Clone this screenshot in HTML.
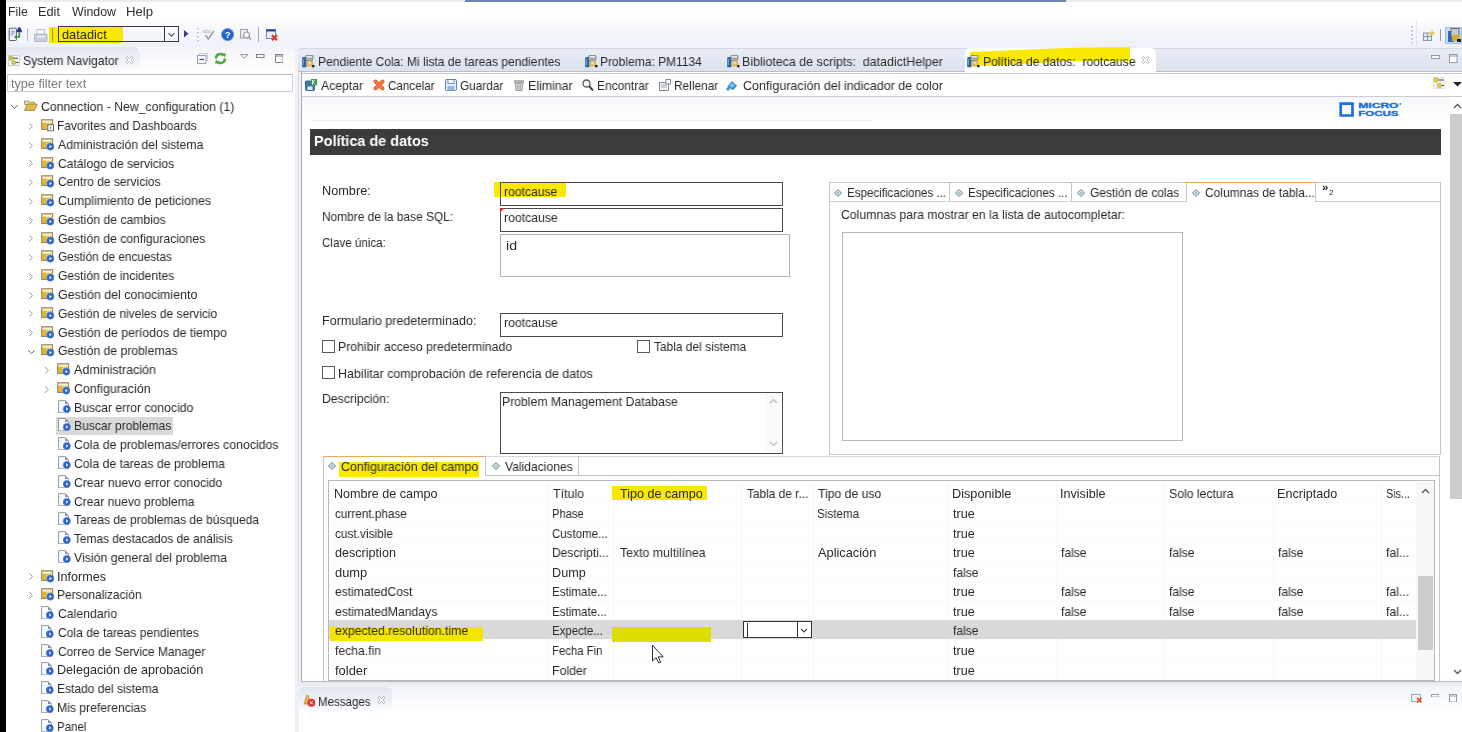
<!DOCTYPE html><html><head><meta charset='utf-8'><style>
*{margin:0;padding:0;box-sizing:border-box}
html,body{width:1462px;height:732px;overflow:hidden;background:#fff;font-family:"Liberation Sans",sans-serif;color:#262626}
body>div,body>svg{position:absolute}
.t{position:absolute;white-space:pre;transform-origin:0 0;will-change:transform}
</style></head><body>
<div style="left:0px;top:0px;width:1462px;height:1.6px;background:#ebebeb"></div>
<div style="left:465px;top:0px;width:601px;height:1.5px;background:#6d86b5"></div>
<div style="left:6px;top:20px;width:1456px;height:27px;background:linear-gradient(#fdfdfe,#f5f7fb 40%,#eef1f8)"></div>
<div style="left:6px;top:47px;width:1456px;height:685px;background:#eef1f7"></div>
<div style="left:0px;top:0px;width:6px;height:732px;background:#000"></div>
<div class="t" style="left:7.76px;top:5.90px;font-size:12.4px;line-height:12.4px;color:#303030;transform:scaleX(0.9802);">File</div>
<div class="t" style="left:37.76px;top:5.90px;font-size:12.4px;line-height:12.4px;color:#303030;transform:scaleX(1.0270);">Edit</div>
<div class="t" style="left:71.64px;top:5.90px;font-size:12.4px;line-height:12.4px;color:#303030;transform:scaleX(0.9913);">Window</div>
<div class="t" style="left:126.42px;top:5.90px;font-size:12.4px;line-height:12.4px;color:#303030;transform:scaleX(1.0637);">Help</div>
<svg style="left:8px;top:27px" width="15" height="15" viewBox="0 0 15 15"><rect x="1.2" y="1.2" width="7.2" height="12.3" rx="0.8" fill="#f2f4f8" stroke="#4a4f60" stroke-width="0.9"/><path d="M2.6 4.2h4.4M2.6 6h4.4M2.6 7.8h3" stroke="#6f8fd0" stroke-width="0.9"/><path d="M9.8 0.6h3v2.2h1v2.4h-5v-2.4h1z" fill="#1f2f8a"/><path d="M11.3 5.2v4.8h-3.5" fill="none" stroke="#3c8a3c" stroke-width="1.6"/><path d="M8.3 8l-2.2 2 2.2 2z" fill="#3c8a3c"/></svg>
<div style="left:26.5px;top:28px;width:1px;height:13px;background:#b9bfc9"></div>
<svg style="left:34px;top:28.5px" width="13.5" height="13" viewBox="0 0 13.5 13"><rect x="3" y="0.5" width="7.5" height="5.5" fill="#fbfbfb" stroke="#b8bcc4" stroke-width="0.9"/><path d="M0.6 5.2h12.3v6.2a1.5 1.5 0 0 1-1.5 1.5H2.1a1.5 1.5 0 0 1-1.5-1.5z" fill="#c9d1df" stroke="#a3abbb" stroke-width="0.9"/><rect x="2.6" y="7" width="8.3" height="1.3" fill="#eef1f6"/></svg>
<div style="left:49px;top:27px;width:74px;height:15.7px;background:#f9e900"></div>
<div style="left:52.2px;top:27.5px;width:1.1px;height:14px;background:#9a9a30"></div>
<div style="left:58px;top:26.2px;width:121px;height:16px;border:1.3px solid #3a3a3a"></div>
<div style="left:59.3px;top:27.5px;width:62px;height:13.4px;background:#f9e900"></div>
<div style="left:163.5px;top:27px;width:1.2px;height:15px;background:#3a3a3a"></div>
<svg style="left:166.5px;top:31.5px" width="9" height="6" viewBox="0 0 9 6"><path d="M1.5 1.2l3 3 3-3" fill="none" stroke="#555" stroke-width="1.1"/></svg>
<div class="t" style="left:61.87px;top:29.46px;font-size:12.8px;line-height:12.8px;color:#2a2a2a;">datadict</div>
<svg style="left:184px;top:30.3px" width="5" height="8" viewBox="0 0 5 8"><path d="M0 0l4.5 3.75L0 7.5z" fill="#3b3f8f"/></svg>
<svg style="left:196.5px;top:28px" width="2" height="13" viewBox="0 0 2 13"><path d="M1 0v1.5M1 4v1.5M1 8v1.5M1 12v1" stroke="#aaa" stroke-width="1.2"/></svg>
<svg style="left:202px;top:27.3px" width="13" height="13" viewBox="0 0 13 13"><text x="0.5" y="5.5" font-size="5.5" fill="#b0b0b0" font-family="Liberation Sans">abc</text><path d="M3.5 8l2.8 4 5.5-8" fill="none" stroke="#a0aaa5" stroke-width="1.8"/></svg>
<svg style="left:220.9px;top:27.6px" width="13.2" height="13.2" viewBox="0 0 13.2 13.2"><circle cx="6.6" cy="6.6" r="6.1" fill="#1f66c9" stroke="#6d9be6" stroke-width="0.9"/><text x="6.6" y="10.2" text-anchor="middle" font-size="9.5" font-weight="bold" fill="#fff" font-family="Liberation Sans">?</text></svg>
<svg style="left:240px;top:29px" width="11.5" height="11" viewBox="0 0 11.5 11"><rect x="0.5" y="0.5" width="7" height="8.5" fill="#eee" stroke="#999" stroke-width="0.9"/><circle cx="6.5" cy="6" r="3" fill="#f6f6f0" stroke="#a0a0a0" stroke-width="1.2"/><path d="M8.5 8l2.3 2.5" stroke="#999" stroke-width="1.6"/></svg>
<div style="left:257.6px;top:27.3px;width:1.2px;height:14.7px;background:#a8aeb8"></div>
<svg style="left:266px;top:28.8px" width="12" height="12" viewBox="0 0 12 12"><rect x="0.5" y="0.5" width="9" height="9" fill="#e8ecf5" stroke="#6a7aa0" stroke-width="0.9"/><rect x="0.5" y="0.5" width="9" height="2" fill="#2a3f9a"/><path d="M6 6.2l5 5M11 6.2l-5 5" stroke="#e03020" stroke-width="2.2"/></svg>
<svg style="left:1410.5px;top:25.5px" width="2" height="17" viewBox="0 0 2 17"><path d="M1 0v1.5M1 4v1.5M1 8v1.5M1 12v1.5M1 16v1" stroke="#999" stroke-width="1.2"/></svg>
<div style="left:1415.5px;top:21px;width:1px;height:26px;background:#e3e6ec"></div>
<svg style="left:1423px;top:29.6px" width="12" height="11" viewBox="0 0 12 11"><rect x="0.5" y="3" width="8" height="7.5" fill="#e4ecf6" stroke="#8090a8" stroke-width="0.9"/><path d="M0.5 6.5h8M4.5 3v7.5" stroke="#8090a8" stroke-width="0.9"/><path d="M9 0l1.2 2 2 .3-1.5 1.5.4 2-2-1-2 1 .4-2-1.5-1.5 2-.3z" fill="#f3c84a"/></svg>
<div style="left:1440.2px;top:29px;width:1px;height:12px;background:#99a"></div>
<div style="left:1445px;top:27px;width:17px;height:17px;background:#c6dcf5;border:1px solid #9cc0ea"></div>
<svg style="left:1447px;top:28px" width="15" height="15" viewBox="0 0 15 15"><rect x="1" y="3" width="6" height="11" fill="#2d6db5"/><rect x="4" y="0.5" width="8" height="9" fill="#c9c9c9" stroke="#555" stroke-width="0.8"/><rect x="5" y="7" width="8" height="6" fill="#d8a838"/><rect x="10" y="11" width="4" height="3" fill="#222"/></svg>
<div style="left:6px;top:47px;width:288.8px;height:685px;background:#fff;border-top-right-radius:5px"></div>
<div style="left:6px;top:47px;width:133.5px;height:25px;background:linear-gradient(#e2e7f0,#f3f5f9 70%,#fff);border-top-right-radius:6px"></div>
<div style="left:139.5px;top:47px;width:155.3px;height:25px;background:linear-gradient(#f3f5f9,#fff);border-top-right-radius:5px"></div>
<svg style="left:8.2px;top:55.4px" width="12" height="11" viewBox="0 0 12 11"><rect x="0.5" y="0.5" width="11" height="10" fill="#f7f7f2" stroke="#c8c8c0" stroke-width="0.8"/><circle cx="3" cy="3.2" r="2" fill="#d6d24a" stroke="#8a8a30" stroke-width="0.6"/><circle cx="5.8" cy="7.5" r="2" fill="#d6d24a" stroke="#8a8a30" stroke-width="0.6"/><path d="M5 3.2h5M8.3 7.5h2.5" stroke="#333" stroke-width="0.9"/></svg>
<div class="t" style="left:23.05px;top:55.43px;font-size:12.6px;line-height:12.6px;color:#2a2a2a;transform:scaleX(0.9619);">System Navigator</div>
<svg style="left:125px;top:56px" width="9" height="9" viewBox="0 0 9 9"><path d="M1 1.5l1.5-1 2 2 2-2 1.5 1-2 2.5 2 2.5-1.5 1-2-2-2 2-1.5-1 2-2.5z" fill="#fff" stroke="#a8a8a8" stroke-width="0.8"/></svg>
<svg style="left:196.8px;top:53px" width="11" height="11" viewBox="0 0 11 11"><rect x="2.5" y="0.5" width="8" height="7" fill="#eef2f8" stroke="#c0c6d2" stroke-width="0.8"/><rect x="0.5" y="2.5" width="8.5" height="8" fill="#f4f7fb" stroke="#8e9ab0" stroke-width="0.9"/><path d="M2.5 6.5h4.5" stroke="#3a5080" stroke-width="1.2"/></svg>
<svg style="left:214px;top:51.5px" width="13" height="13" viewBox="0 0 13 13"><path d="M2 6.5a4.5 4.5 0 0 1 8-2.8" fill="none" stroke="#4fa83e" stroke-width="2.6"/><path d="M11 6.5a4.5 4.5 0 0 1-8 2.8" fill="none" stroke="#4fa83e" stroke-width="2.6"/><path d="M8 1.5l4 0-1 4z" fill="#4fa83e"/><path d="M5 11.5l-4 0 1-4z" fill="#4fa83e"/></svg>
<svg style="left:240px;top:53.9px" width="8.5" height="5" viewBox="0 0 8.5 5"><path d="M0.8 0.6h7l-3.5 3.8z" fill="#fff" stroke="#888" stroke-width="0.9"/></svg>
<svg style="left:256px;top:54px" width="8.5" height="4" viewBox="0 0 8.5 4"><rect x="0.5" y="0.5" width="7.5" height="3" fill="#fff" stroke="#777" stroke-width="0.9"/></svg>
<svg style="left:274.8px;top:54px" width="8.5" height="9" viewBox="0 0 8.5 9"><rect x="0.5" y="0.5" width="7.5" height="8" fill="#fff" stroke="#777" stroke-width="0.9"/><path d="M0.5 2h7.5" stroke="#777" stroke-width="0.9"/></svg>
<div style="left:7px;top:73.8px;width:285.5px;height:18.5px;border:1px solid #cfcfcf;border-top-color:#c2c2c2;background:#fff"></div>
<div class="t" style="left:11.11px;top:78.03px;font-size:12.6px;line-height:12.6px;color:#7c7c7c;transform:scaleX(1.0036);">type filter text</div>
<svg style="left:10px;top:103.5px" width="9" height="6" viewBox="0 0 9 6"><path d="M1.2 1.2l3.3 3.2 3.3-3.2" fill="none" stroke="#666" stroke-width="1"/></svg>
<svg style="left:24px;top:99.0px" width="14" height="13" viewBox="0 0 14 13"><path d="M0.5 2h4l1 1.3h5v2.2h-10z" fill="#f3df9a" stroke="#9a8a58" stroke-width="0.9"/><path d="M0.5 11.5h10l2.8-6.5h-10z" fill="#e3b83c" stroke="#9a8a58" stroke-width="0.9"/></svg>
<div class="t" style="left:41.09px;top:101.33px;font-size:12.6px;line-height:12.6px;color:#2a2a2a;transform:scaleX(0.9757);">Connection - New_configuration (1)</div>
<svg style="left:27.900000000000002px;top:121.77000000000001px" width="6" height="9" viewBox="0 0 6 9"><path d="M1.2 1.2l3.2 3.3-3.2 3.3" fill="none" stroke="#9a9a9a" stroke-width="1"/></svg>
<svg style="left:41.10000000000001px;top:119.07000000000001px" width="14" height="14" viewBox="0 0 14 14"><rect x="0.7" y="0.8" width="11" height="9.8" fill="#dcb548" stroke="#7f7350" stroke-width="0.9"/><rect x="1.3" y="1.6" width="9.8" height="2.2" fill="#f6f0dc"/><rect x="1.3" y="3.8" width="4" height="6.4" fill="#e2b432"/><rect x="5.3" y="3.8" width="5.8" height="6.4" fill="#e4d27a"/><rect x="6.8" y="5.8" width="5.7" height="6" fill="#fff" stroke="#555" stroke-width="0.9"/><path d="M9.8 7.5l-1 2 1.6 0z" fill="#222"/></svg>
<div class="t" style="left:57.23px;top:120.10px;font-size:12.6px;line-height:12.6px;color:#2a2a2a;transform:scaleX(0.9447);">Favorites and Dashboards</div>
<svg style="left:27.900000000000002px;top:140.54px" width="6" height="9" viewBox="0 0 6 9"><path d="M1.2 1.2l3.2 3.3-3.2 3.3" fill="none" stroke="#9a9a9a" stroke-width="1"/></svg>
<svg style="left:41.10000000000001px;top:137.84px" width="14" height="14" viewBox="0 0 14 14"><rect x="0.7" y="0.8" width="11" height="9.8" fill="#dcb548" stroke="#7f7350" stroke-width="0.9"/><rect x="1.3" y="1.6" width="9.8" height="2.2" fill="#f6f0dc"/><rect x="1.3" y="3.8" width="4" height="6.4" fill="#e2b432"/><rect x="5.3" y="3.8" width="5.8" height="6.4" fill="#e4d27a"/><circle cx="9.3" cy="8.6" r="3.6" fill="#2f66cc" stroke="#4f86de" stroke-width="0.6"/><path d="M8.5 6.9l2.4 1.7-2.4 1.7z" fill="#fff"/></svg>
<div class="t" style="left:58.18px;top:138.87px;font-size:12.6px;line-height:12.6px;color:#2a2a2a;transform:scaleX(0.9704);">Administración del sistema</div>
<svg style="left:27.900000000000002px;top:159.31px" width="6" height="9" viewBox="0 0 6 9"><path d="M1.2 1.2l3.2 3.3-3.2 3.3" fill="none" stroke="#9a9a9a" stroke-width="1"/></svg>
<svg style="left:41.10000000000001px;top:156.61px" width="14" height="14" viewBox="0 0 14 14"><rect x="0.7" y="0.8" width="11" height="9.8" fill="#dcb548" stroke="#7f7350" stroke-width="0.9"/><rect x="1.3" y="1.6" width="9.8" height="2.2" fill="#f6f0dc"/><rect x="1.3" y="3.8" width="4" height="6.4" fill="#e2b432"/><rect x="5.3" y="3.8" width="5.8" height="6.4" fill="#e4d27a"/><circle cx="9.3" cy="8.6" r="3.6" fill="#2f66cc" stroke="#4f86de" stroke-width="0.6"/><path d="M8.5 6.9l2.4 1.7-2.4 1.7z" fill="#fff"/></svg>
<div class="t" style="left:57.59px;top:157.64px;font-size:12.6px;line-height:12.6px;color:#2a2a2a;transform:scaleX(0.9660);">Catálogo de servicios</div>
<svg style="left:27.900000000000002px;top:178.07999999999998px" width="6" height="9" viewBox="0 0 6 9"><path d="M1.2 1.2l3.2 3.3-3.2 3.3" fill="none" stroke="#9a9a9a" stroke-width="1"/></svg>
<svg style="left:41.10000000000001px;top:175.38px" width="14" height="14" viewBox="0 0 14 14"><rect x="0.7" y="0.8" width="11" height="9.8" fill="#dcb548" stroke="#7f7350" stroke-width="0.9"/><rect x="1.3" y="1.6" width="9.8" height="2.2" fill="#f6f0dc"/><rect x="1.3" y="3.8" width="4" height="6.4" fill="#e2b432"/><rect x="5.3" y="3.8" width="5.8" height="6.4" fill="#e4d27a"/><circle cx="9.3" cy="8.6" r="3.6" fill="#2f66cc" stroke="#4f86de" stroke-width="0.6"/><path d="M8.5 6.9l2.4 1.7-2.4 1.7z" fill="#fff"/></svg>
<div class="t" style="left:57.60px;top:176.41px;font-size:12.6px;line-height:12.6px;color:#2a2a2a;transform:scaleX(0.9509);">Centro de servicios</div>
<svg style="left:27.900000000000002px;top:196.85px" width="6" height="9" viewBox="0 0 6 9"><path d="M1.2 1.2l3.2 3.3-3.2 3.3" fill="none" stroke="#9a9a9a" stroke-width="1"/></svg>
<svg style="left:41.10000000000001px;top:194.15px" width="14" height="14" viewBox="0 0 14 14"><rect x="0.7" y="0.8" width="11" height="9.8" fill="#dcb548" stroke="#7f7350" stroke-width="0.9"/><rect x="1.3" y="1.6" width="9.8" height="2.2" fill="#f6f0dc"/><rect x="1.3" y="3.8" width="4" height="6.4" fill="#e2b432"/><rect x="5.3" y="3.8" width="5.8" height="6.4" fill="#e4d27a"/><circle cx="9.3" cy="8.6" r="3.6" fill="#2f66cc" stroke="#4f86de" stroke-width="0.6"/><path d="M8.5 6.9l2.4 1.7-2.4 1.7z" fill="#fff"/></svg>
<div class="t" style="left:57.58px;top:195.18px;font-size:12.6px;line-height:12.6px;color:#2a2a2a;transform:scaleX(0.9891);">Cumplimiento de peticiones</div>
<svg style="left:27.900000000000002px;top:215.62px" width="6" height="9" viewBox="0 0 6 9"><path d="M1.2 1.2l3.2 3.3-3.2 3.3" fill="none" stroke="#9a9a9a" stroke-width="1"/></svg>
<svg style="left:41.10000000000001px;top:212.92000000000002px" width="14" height="14" viewBox="0 0 14 14"><rect x="0.7" y="0.8" width="11" height="9.8" fill="#dcb548" stroke="#7f7350" stroke-width="0.9"/><rect x="1.3" y="1.6" width="9.8" height="2.2" fill="#f6f0dc"/><rect x="1.3" y="3.8" width="4" height="6.4" fill="#e2b432"/><rect x="5.3" y="3.8" width="5.8" height="6.4" fill="#e4d27a"/><circle cx="9.3" cy="8.6" r="3.6" fill="#2f66cc" stroke="#4f86de" stroke-width="0.6"/><path d="M8.5 6.9l2.4 1.7-2.4 1.7z" fill="#fff"/></svg>
<div class="t" style="left:57.59px;top:213.95px;font-size:12.6px;line-height:12.6px;color:#2a2a2a;transform:scaleX(0.9676);">Gestión de cambios</div>
<svg style="left:27.900000000000002px;top:234.39px" width="6" height="9" viewBox="0 0 6 9"><path d="M1.2 1.2l3.2 3.3-3.2 3.3" fill="none" stroke="#9a9a9a" stroke-width="1"/></svg>
<svg style="left:41.10000000000001px;top:231.69px" width="14" height="14" viewBox="0 0 14 14"><rect x="0.7" y="0.8" width="11" height="9.8" fill="#dcb548" stroke="#7f7350" stroke-width="0.9"/><rect x="1.3" y="1.6" width="9.8" height="2.2" fill="#f6f0dc"/><rect x="1.3" y="3.8" width="4" height="6.4" fill="#e2b432"/><rect x="5.3" y="3.8" width="5.8" height="6.4" fill="#e4d27a"/><circle cx="9.3" cy="8.6" r="3.6" fill="#2f66cc" stroke="#4f86de" stroke-width="0.6"/><path d="M8.5 6.9l2.4 1.7-2.4 1.7z" fill="#fff"/></svg>
<div class="t" style="left:57.59px;top:232.72px;font-size:12.6px;line-height:12.6px;color:#2a2a2a;transform:scaleX(0.9650);">Gestión de configuraciones</div>
<svg style="left:27.900000000000002px;top:253.15999999999997px" width="6" height="9" viewBox="0 0 6 9"><path d="M1.2 1.2l3.2 3.3-3.2 3.3" fill="none" stroke="#9a9a9a" stroke-width="1"/></svg>
<svg style="left:41.10000000000001px;top:250.45999999999998px" width="14" height="14" viewBox="0 0 14 14"><rect x="0.7" y="0.8" width="11" height="9.8" fill="#dcb548" stroke="#7f7350" stroke-width="0.9"/><rect x="1.3" y="1.6" width="9.8" height="2.2" fill="#f6f0dc"/><rect x="1.3" y="3.8" width="4" height="6.4" fill="#e2b432"/><rect x="5.3" y="3.8" width="5.8" height="6.4" fill="#e4d27a"/><circle cx="9.3" cy="8.6" r="3.6" fill="#2f66cc" stroke="#4f86de" stroke-width="0.6"/><path d="M8.5 6.9l2.4 1.7-2.4 1.7z" fill="#fff"/></svg>
<div class="t" style="left:57.61px;top:251.49px;font-size:12.6px;line-height:12.6px;color:#2a2a2a;transform:scaleX(0.9355);">Gestión de encuestas</div>
<svg style="left:27.900000000000002px;top:271.93px" width="6" height="9" viewBox="0 0 6 9"><path d="M1.2 1.2l3.2 3.3-3.2 3.3" fill="none" stroke="#9a9a9a" stroke-width="1"/></svg>
<svg style="left:41.10000000000001px;top:269.23px" width="14" height="14" viewBox="0 0 14 14"><rect x="0.7" y="0.8" width="11" height="9.8" fill="#dcb548" stroke="#7f7350" stroke-width="0.9"/><rect x="1.3" y="1.6" width="9.8" height="2.2" fill="#f6f0dc"/><rect x="1.3" y="3.8" width="4" height="6.4" fill="#e2b432"/><rect x="5.3" y="3.8" width="5.8" height="6.4" fill="#e4d27a"/><circle cx="9.3" cy="8.6" r="3.6" fill="#2f66cc" stroke="#4f86de" stroke-width="0.6"/><path d="M8.5 6.9l2.4 1.7-2.4 1.7z" fill="#fff"/></svg>
<div class="t" style="left:57.60px;top:270.26px;font-size:12.6px;line-height:12.6px;color:#2a2a2a;transform:scaleX(0.9602);">Gestión de incidentes</div>
<svg style="left:27.900000000000002px;top:290.7px" width="6" height="9" viewBox="0 0 6 9"><path d="M1.2 1.2l3.2 3.3-3.2 3.3" fill="none" stroke="#9a9a9a" stroke-width="1"/></svg>
<svg style="left:41.10000000000001px;top:288.0px" width="14" height="14" viewBox="0 0 14 14"><rect x="0.7" y="0.8" width="11" height="9.8" fill="#dcb548" stroke="#7f7350" stroke-width="0.9"/><rect x="1.3" y="1.6" width="9.8" height="2.2" fill="#f6f0dc"/><rect x="1.3" y="3.8" width="4" height="6.4" fill="#e2b432"/><rect x="5.3" y="3.8" width="5.8" height="6.4" fill="#e4d27a"/><circle cx="9.3" cy="8.6" r="3.6" fill="#2f66cc" stroke="#4f86de" stroke-width="0.6"/><path d="M8.5 6.9l2.4 1.7-2.4 1.7z" fill="#fff"/></svg>
<div class="t" style="left:57.58px;top:289.03px;font-size:12.6px;line-height:12.6px;color:#2a2a2a;transform:scaleX(0.9849);">Gestión del conocimiento</div>
<svg style="left:27.900000000000002px;top:309.47px" width="6" height="9" viewBox="0 0 6 9"><path d="M1.2 1.2l3.2 3.3-3.2 3.3" fill="none" stroke="#9a9a9a" stroke-width="1"/></svg>
<svg style="left:41.10000000000001px;top:306.77000000000004px" width="14" height="14" viewBox="0 0 14 14"><rect x="0.7" y="0.8" width="11" height="9.8" fill="#dcb548" stroke="#7f7350" stroke-width="0.9"/><rect x="1.3" y="1.6" width="9.8" height="2.2" fill="#f6f0dc"/><rect x="1.3" y="3.8" width="4" height="6.4" fill="#e2b432"/><rect x="5.3" y="3.8" width="5.8" height="6.4" fill="#e4d27a"/><circle cx="9.3" cy="8.6" r="3.6" fill="#2f66cc" stroke="#4f86de" stroke-width="0.6"/><path d="M8.5 6.9l2.4 1.7-2.4 1.7z" fill="#fff"/></svg>
<div class="t" style="left:57.60px;top:307.80px;font-size:12.6px;line-height:12.6px;color:#2a2a2a;transform:scaleX(0.9517);">Gestión de niveles de servicio</div>
<svg style="left:27.900000000000002px;top:328.24px" width="6" height="9" viewBox="0 0 6 9"><path d="M1.2 1.2l3.2 3.3-3.2 3.3" fill="none" stroke="#9a9a9a" stroke-width="1"/></svg>
<svg style="left:41.10000000000001px;top:325.54px" width="14" height="14" viewBox="0 0 14 14"><rect x="0.7" y="0.8" width="11" height="9.8" fill="#dcb548" stroke="#7f7350" stroke-width="0.9"/><rect x="1.3" y="1.6" width="9.8" height="2.2" fill="#f6f0dc"/><rect x="1.3" y="3.8" width="4" height="6.4" fill="#e2b432"/><rect x="5.3" y="3.8" width="5.8" height="6.4" fill="#e4d27a"/><circle cx="9.3" cy="8.6" r="3.6" fill="#2f66cc" stroke="#4f86de" stroke-width="0.6"/><path d="M8.5 6.9l2.4 1.7-2.4 1.7z" fill="#fff"/></svg>
<div class="t" style="left:57.58px;top:326.57px;font-size:12.6px;line-height:12.6px;color:#2a2a2a;transform:scaleX(0.9804);">Gestión de períodos de tiempo</div>
<svg style="left:26.900000000000002px;top:348.51px" width="9" height="6" viewBox="0 0 9 6"><path d="M1.2 1.2l3.3 3.2 3.3-3.2" fill="none" stroke="#666" stroke-width="1"/></svg>
<svg style="left:41.10000000000001px;top:344.31px" width="14" height="14" viewBox="0 0 14 14"><rect x="0.7" y="0.8" width="11" height="9.8" fill="#dcb548" stroke="#7f7350" stroke-width="0.9"/><rect x="1.3" y="1.6" width="9.8" height="2.2" fill="#f6f0dc"/><rect x="1.3" y="3.8" width="4" height="6.4" fill="#e2b432"/><rect x="5.3" y="3.8" width="5.8" height="6.4" fill="#e4d27a"/><circle cx="9.3" cy="8.6" r="3.6" fill="#2f66cc" stroke="#4f86de" stroke-width="0.6"/><path d="M8.5 6.9l2.4 1.7-2.4 1.7z" fill="#fff"/></svg>
<div class="t" style="left:57.59px;top:345.34px;font-size:12.6px;line-height:12.6px;color:#2a2a2a;transform:scaleX(0.9699);">Gestión de problemas</div>
<svg style="left:44.2px;top:365.78px" width="6" height="9" viewBox="0 0 6 9"><path d="M1.2 1.2l3.2 3.3-3.2 3.3" fill="none" stroke="#9a9a9a" stroke-width="1"/></svg>
<svg style="left:57.400000000000006px;top:363.08px" width="14" height="14" viewBox="0 0 14 14"><rect x="0.7" y="0.8" width="11" height="9.8" fill="#dcb548" stroke="#7f7350" stroke-width="0.9"/><rect x="1.3" y="1.6" width="9.8" height="2.2" fill="#f6f0dc"/><rect x="1.3" y="3.8" width="4" height="6.4" fill="#e2b432"/><rect x="5.3" y="3.8" width="5.8" height="6.4" fill="#e4d27a"/><circle cx="9.3" cy="8.6" r="3.6" fill="#2f66cc" stroke="#4f86de" stroke-width="0.6"/><path d="M8.5 6.9l2.4 1.7-2.4 1.7z" fill="#fff"/></svg>
<div class="t" style="left:74.48px;top:364.11px;font-size:12.6px;line-height:12.6px;color:#2a2a2a;transform:scaleX(0.9927);">Administración</div>
<svg style="left:44.2px;top:384.55px" width="6" height="9" viewBox="0 0 6 9"><path d="M1.2 1.2l3.2 3.3-3.2 3.3" fill="none" stroke="#9a9a9a" stroke-width="1"/></svg>
<svg style="left:57.400000000000006px;top:381.85px" width="14" height="14" viewBox="0 0 14 14"><rect x="0.7" y="0.8" width="11" height="9.8" fill="#dcb548" stroke="#7f7350" stroke-width="0.9"/><rect x="1.3" y="1.6" width="9.8" height="2.2" fill="#f6f0dc"/><rect x="1.3" y="3.8" width="4" height="6.4" fill="#e2b432"/><rect x="5.3" y="3.8" width="5.8" height="6.4" fill="#e4d27a"/><circle cx="9.3" cy="8.6" r="3.6" fill="#2f66cc" stroke="#4f86de" stroke-width="0.6"/><path d="M8.5 6.9l2.4 1.7-2.4 1.7z" fill="#fff"/></svg>
<div class="t" style="left:73.88px;top:382.88px;font-size:12.6px;line-height:12.6px;color:#2a2a2a;transform:scaleX(0.9854);">Configuración</div>
<svg style="left:57.5px;top:399.62px" width="13" height="13" viewBox="0 0 13 13"><path d="M0.6 0.6h6.6l3.2 3.2v9h-9.8z" fill="#fbfdff" stroke="#8d9aaa" stroke-width="1"/><path d="M7 0.6v3.4h3.4z" fill="#7f93b8"/><circle cx="8.8" cy="9.0" r="3.6" fill="#2f62c8" stroke="#4f80d8" stroke-width="0.6"/><path d="M8.1 7.3l2.3 1.7-2.3 1.7z" fill="#e8f4ff"/></svg>
<div class="t" style="left:73.50px;top:401.65px;font-size:12.6px;line-height:12.6px;color:#2a2a2a;transform:scaleX(0.9686);">Buscar error conocido</div>
<div style="left:56.2px;top:416.59px;width:117px;height:18px;background:#d9d9d9"></div>
<svg style="left:57.5px;top:418.39px" width="13" height="13" viewBox="0 0 13 13"><path d="M0.6 0.6h6.6l3.2 3.2v9h-9.8z" fill="#fbfdff" stroke="#8d9aaa" stroke-width="1"/><path d="M7 0.6v3.4h3.4z" fill="#7f93b8"/><circle cx="8.8" cy="9.0" r="3.6" fill="#2f62c8" stroke="#4f80d8" stroke-width="0.6"/><path d="M8.1 7.3l2.3 1.7-2.3 1.7z" fill="#e8f4ff"/></svg>
<div class="t" style="left:73.51px;top:420.42px;font-size:12.6px;line-height:12.6px;color:#2a2a2a;transform:scaleX(0.9586);">Buscar problemas</div>
<svg style="left:57.5px;top:437.16px" width="13" height="13" viewBox="0 0 13 13"><path d="M0.6 0.6h6.6l3.2 3.2v9h-9.8z" fill="#fbfdff" stroke="#8d9aaa" stroke-width="1"/><path d="M7 0.6v3.4h3.4z" fill="#7f93b8"/><circle cx="8.8" cy="9.0" r="3.6" fill="#2f62c8" stroke="#4f80d8" stroke-width="0.6"/><path d="M8.1 7.3l2.3 1.7-2.3 1.7z" fill="#e8f4ff"/></svg>
<div class="t" style="left:73.88px;top:439.19px;font-size:12.6px;line-height:12.6px;color:#2a2a2a;transform:scaleX(0.9769);">Cola de problemas/errores conocidos</div>
<svg style="left:57.5px;top:455.93px" width="13" height="13" viewBox="0 0 13 13"><path d="M0.6 0.6h6.6l3.2 3.2v9h-9.8z" fill="#fbfdff" stroke="#8d9aaa" stroke-width="1"/><path d="M7 0.6v3.4h3.4z" fill="#7f93b8"/><circle cx="8.8" cy="9.0" r="3.6" fill="#2f62c8" stroke="#4f80d8" stroke-width="0.6"/><path d="M8.1 7.3l2.3 1.7-2.3 1.7z" fill="#e8f4ff"/></svg>
<div class="t" style="left:73.89px;top:457.96px;font-size:12.6px;line-height:12.6px;color:#2a2a2a;transform:scaleX(0.9705);">Cola de tareas de problema</div>
<svg style="left:57.5px;top:474.7px" width="13" height="13" viewBox="0 0 13 13"><path d="M0.6 0.6h6.6l3.2 3.2v9h-9.8z" fill="#fbfdff" stroke="#8d9aaa" stroke-width="1"/><path d="M7 0.6v3.4h3.4z" fill="#7f93b8"/><circle cx="8.8" cy="9.0" r="3.6" fill="#2f62c8" stroke="#4f80d8" stroke-width="0.6"/><path d="M8.1 7.3l2.3 1.7-2.3 1.7z" fill="#e8f4ff"/></svg>
<div class="t" style="left:73.89px;top:476.73px;font-size:12.6px;line-height:12.6px;color:#2a2a2a;transform:scaleX(0.9676);">Crear nuevo error conocido</div>
<svg style="left:57.5px;top:493.47px" width="13" height="13" viewBox="0 0 13 13"><path d="M0.6 0.6h6.6l3.2 3.2v9h-9.8z" fill="#fbfdff" stroke="#8d9aaa" stroke-width="1"/><path d="M7 0.6v3.4h3.4z" fill="#7f93b8"/><circle cx="8.8" cy="9.0" r="3.6" fill="#2f62c8" stroke="#4f80d8" stroke-width="0.6"/><path d="M8.1 7.3l2.3 1.7-2.3 1.7z" fill="#e8f4ff"/></svg>
<div class="t" style="left:73.89px;top:495.50px;font-size:12.6px;line-height:12.6px;color:#2a2a2a;transform:scaleX(0.9620);">Crear nuevo problema</div>
<svg style="left:57.5px;top:512.24px" width="13" height="13" viewBox="0 0 13 13"><path d="M0.6 0.6h6.6l3.2 3.2v9h-9.8z" fill="#fbfdff" stroke="#8d9aaa" stroke-width="1"/><path d="M7 0.6v3.4h3.4z" fill="#7f93b8"/><circle cx="8.8" cy="9.0" r="3.6" fill="#2f62c8" stroke="#4f80d8" stroke-width="0.6"/><path d="M8.1 7.3l2.3 1.7-2.3 1.7z" fill="#e8f4ff"/></svg>
<div class="t" style="left:74.24px;top:514.27px;font-size:12.6px;line-height:12.6px;color:#2a2a2a;transform:scaleX(0.9537);">Tareas de problemas de búsqueda</div>
<svg style="left:57.5px;top:531.01px" width="13" height="13" viewBox="0 0 13 13"><path d="M0.6 0.6h6.6l3.2 3.2v9h-9.8z" fill="#fbfdff" stroke="#8d9aaa" stroke-width="1"/><path d="M7 0.6v3.4h3.4z" fill="#7f93b8"/><circle cx="8.8" cy="9.0" r="3.6" fill="#2f62c8" stroke="#4f80d8" stroke-width="0.6"/><path d="M8.1 7.3l2.3 1.7-2.3 1.7z" fill="#e8f4ff"/></svg>
<div class="t" style="left:74.24px;top:533.04px;font-size:12.6px;line-height:12.6px;color:#2a2a2a;transform:scaleX(0.9447);">Temas destacados de análisis</div>
<svg style="left:57.5px;top:549.78px" width="13" height="13" viewBox="0 0 13 13"><path d="M0.6 0.6h6.6l3.2 3.2v9h-9.8z" fill="#fbfdff" stroke="#8d9aaa" stroke-width="1"/><path d="M7 0.6v3.4h3.4z" fill="#7f93b8"/><circle cx="8.8" cy="9.0" r="3.6" fill="#2f62c8" stroke="#4f80d8" stroke-width="0.6"/><path d="M8.1 7.3l2.3 1.7-2.3 1.7z" fill="#e8f4ff"/></svg>
<div class="t" style="left:74.44px;top:551.81px;font-size:12.6px;line-height:12.6px;color:#2a2a2a;transform:scaleX(0.9814);">Visión general del problema</div>
<svg style="left:27.900000000000002px;top:572.25px" width="6" height="9" viewBox="0 0 6 9"><path d="M1.2 1.2l3.2 3.3-3.2 3.3" fill="none" stroke="#9a9a9a" stroke-width="1"/></svg>
<svg style="left:41.10000000000001px;top:569.55px" width="14" height="14" viewBox="0 0 14 14"><rect x="0.7" y="0.8" width="11" height="9.8" fill="#dcb548" stroke="#7f7350" stroke-width="0.9"/><rect x="1.3" y="1.6" width="9.8" height="2.2" fill="#f6f0dc"/><rect x="1.3" y="3.8" width="4" height="6.4" fill="#e2b432"/><rect x="5.3" y="3.8" width="5.8" height="6.4" fill="#e4d27a"/><circle cx="9.3" cy="8.6" r="3.6" fill="#2f66cc" stroke="#4f86de" stroke-width="0.6"/><path d="M8.5 6.9l2.4 1.7-2.4 1.7z" fill="#fff"/></svg>
<div class="t" style="left:57.05px;top:570.58px;font-size:12.6px;line-height:12.6px;color:#2a2a2a;transform:scaleX(0.9916);">Informes</div>
<svg style="left:27.900000000000002px;top:591.02px" width="6" height="9" viewBox="0 0 6 9"><path d="M1.2 1.2l3.2 3.3-3.2 3.3" fill="none" stroke="#9a9a9a" stroke-width="1"/></svg>
<svg style="left:41.10000000000001px;top:588.3199999999999px" width="14" height="14" viewBox="0 0 14 14"><rect x="0.7" y="0.8" width="11" height="9.8" fill="#dcb548" stroke="#7f7350" stroke-width="0.9"/><rect x="1.3" y="1.6" width="9.8" height="2.2" fill="#f6f0dc"/><rect x="1.3" y="3.8" width="4" height="6.4" fill="#e2b432"/><rect x="5.3" y="3.8" width="5.8" height="6.4" fill="#e4d27a"/><circle cx="9.3" cy="8.6" r="3.6" fill="#2f66cc" stroke="#4f86de" stroke-width="0.6"/><path d="M8.5 6.9l2.4 1.7-2.4 1.7z" fill="#fff"/></svg>
<div class="t" style="left:57.22px;top:589.35px;font-size:12.6px;line-height:12.6px;color:#2a2a2a;transform:scaleX(0.9505);">Personalización</div>
<svg style="left:41.2px;top:606.0899999999999px" width="13" height="13" viewBox="0 0 13 13"><path d="M0.6 0.6h6.6l3.2 3.2v9h-9.8z" fill="#fbfdff" stroke="#8d9aaa" stroke-width="1"/><path d="M7 0.6v3.4h3.4z" fill="#7f93b8"/><circle cx="8.8" cy="9.0" r="3.6" fill="#2f62c8" stroke="#4f80d8" stroke-width="0.6"/><path d="M8.1 7.3l2.3 1.7-2.3 1.7z" fill="#e8f4ff"/></svg>
<div class="t" style="left:57.59px;top:608.12px;font-size:12.6px;line-height:12.6px;color:#2a2a2a;transform:scaleX(0.9701);">Calendario</div>
<svg style="left:41.2px;top:624.8599999999999px" width="13" height="13" viewBox="0 0 13 13"><path d="M0.6 0.6h6.6l3.2 3.2v9h-9.8z" fill="#fbfdff" stroke="#8d9aaa" stroke-width="1"/><path d="M7 0.6v3.4h3.4z" fill="#7f93b8"/><circle cx="8.8" cy="9.0" r="3.6" fill="#2f62c8" stroke="#4f80d8" stroke-width="0.6"/><path d="M8.1 7.3l2.3 1.7-2.3 1.7z" fill="#e8f4ff"/></svg>
<div class="t" style="left:57.60px;top:626.89px;font-size:12.6px;line-height:12.6px;color:#2a2a2a;transform:scaleX(0.9574);">Cola de tareas pendientes</div>
<svg style="left:41.2px;top:643.63px" width="13" height="13" viewBox="0 0 13 13"><path d="M0.6 0.6h6.6l3.2 3.2v9h-9.8z" fill="#fbfdff" stroke="#8d9aaa" stroke-width="1"/><path d="M7 0.6v3.4h3.4z" fill="#7f93b8"/><circle cx="8.8" cy="9.0" r="3.6" fill="#2f62c8" stroke="#4f80d8" stroke-width="0.6"/><path d="M8.1 7.3l2.3 1.7-2.3 1.7z" fill="#e8f4ff"/></svg>
<div class="t" style="left:57.60px;top:645.66px;font-size:12.6px;line-height:12.6px;color:#2a2a2a;transform:scaleX(0.9517);">Correo de Service Manager</div>
<svg style="left:41.2px;top:662.4px" width="13" height="13" viewBox="0 0 13 13"><path d="M0.6 0.6h6.6l3.2 3.2v9h-9.8z" fill="#fbfdff" stroke="#8d9aaa" stroke-width="1"/><path d="M7 0.6v3.4h3.4z" fill="#7f93b8"/><circle cx="8.8" cy="9.0" r="3.6" fill="#2f62c8" stroke="#4f80d8" stroke-width="0.6"/><path d="M8.1 7.3l2.3 1.7-2.3 1.7z" fill="#e8f4ff"/></svg>
<div class="t" style="left:57.17px;top:664.43px;font-size:12.6px;line-height:12.6px;color:#2a2a2a;transform:scaleX(0.9968);">Delegación de aprobación</div>
<svg style="left:41.2px;top:681.17px" width="13" height="13" viewBox="0 0 13 13"><path d="M0.6 0.6h6.6l3.2 3.2v9h-9.8z" fill="#fbfdff" stroke="#8d9aaa" stroke-width="1"/><path d="M7 0.6v3.4h3.4z" fill="#7f93b8"/><circle cx="8.8" cy="9.0" r="3.6" fill="#2f62c8" stroke="#4f80d8" stroke-width="0.6"/><path d="M8.1 7.3l2.3 1.7-2.3 1.7z" fill="#e8f4ff"/></svg>
<div class="t" style="left:57.22px;top:683.20px;font-size:12.6px;line-height:12.6px;color:#2a2a2a;transform:scaleX(0.9522);">Estado del sistema</div>
<svg style="left:41.2px;top:699.9399999999999px" width="13" height="13" viewBox="0 0 13 13"><path d="M0.6 0.6h6.6l3.2 3.2v9h-9.8z" fill="#fbfdff" stroke="#8d9aaa" stroke-width="1"/><path d="M7 0.6v3.4h3.4z" fill="#7f93b8"/><circle cx="8.8" cy="9.0" r="3.6" fill="#2f62c8" stroke="#4f80d8" stroke-width="0.6"/><path d="M8.1 7.3l2.3 1.7-2.3 1.7z" fill="#e8f4ff"/></svg>
<div class="t" style="left:57.20px;top:701.97px;font-size:12.6px;line-height:12.6px;color:#2a2a2a;transform:scaleX(0.9676);">Mis preferencias</div>
<svg style="left:41.2px;top:718.7099999999999px" width="13" height="13" viewBox="0 0 13 13"><path d="M0.6 0.6h6.6l3.2 3.2v9h-9.8z" fill="#fbfdff" stroke="#8d9aaa" stroke-width="1"/><path d="M7 0.6v3.4h3.4z" fill="#7f93b8"/><circle cx="8.8" cy="9.0" r="3.6" fill="#2f62c8" stroke="#4f80d8" stroke-width="0.6"/><path d="M8.1 7.3l2.3 1.7-2.3 1.7z" fill="#e8f4ff"/></svg>
<div class="t" style="left:57.26px;top:720.74px;font-size:12.6px;line-height:12.6px;color:#2a2a2a;transform:scaleX(0.9095);">Panel</div>
<div style="left:297.8px;top:47.5px;width:1164.2px;height:24px;background:linear-gradient(#e8edf5,#dbe2ed);border-top:1px solid #d3dae6;border-top-left-radius:4px"></div>
<div style="left:297.8px;top:71.2px;width:1164.2px;height:1.2px;background:#b7bfcb"></div>
<svg style="left:302px;top:54.5px" width="13" height="13" viewBox="0 0 13 13"><path d="M1.5 2h3v10.3H0.2V3.3a1.3 1.3 0 0 1 1.3-1.3z" fill="#2a64a8"/><rect x="0.8" y="4" width="1.2" height="6" fill="#6fa0d8"/><rect x="3.9" y="0.3" width="7" height="5" rx="0.6" fill="#bfc3c8" stroke="#6e7278" stroke-width="0.8"/><rect x="4.8" y="1.3" width="5.2" height="1.1" fill="#f4f4f4"/><rect x="4.8" y="3.1" width="5.2" height="0.8" fill="#8a8e94"/><path d="M4.6 5.9h6.4l0.6 5.7H4.4z" fill="#d9b85a"/><circle cx="7.8" cy="8" r="1.6" fill="#f1dfa0"/><rect x="10.2" y="10" width="2.2" height="2.3" fill="#151515"/></svg>
<div class="t" style="left:318.02px;top:56.13px;font-size:12.6px;line-height:12.6px;color:#2a2a2a;transform:scaleX(0.9561);">Pendiente Cola: Mi lista de tareas pendientes</div>
<svg style="left:584.5px;top:54.5px" width="13" height="13" viewBox="0 0 13 13"><path d="M1.5 2h3v10.3H0.2V3.3a1.3 1.3 0 0 1 1.3-1.3z" fill="#2a64a8"/><rect x="0.8" y="4" width="1.2" height="6" fill="#6fa0d8"/><rect x="3.9" y="0.3" width="7" height="5" rx="0.6" fill="#bfc3c8" stroke="#6e7278" stroke-width="0.8"/><rect x="4.8" y="1.3" width="5.2" height="1.1" fill="#f4f4f4"/><rect x="4.8" y="3.1" width="5.2" height="0.8" fill="#8a8e94"/><path d="M4.6 5.9h6.4l0.6 5.7H4.4z" fill="#d9b85a"/><circle cx="7.8" cy="8" r="1.6" fill="#f1dfa0"/><rect x="10.2" y="10" width="2.2" height="2.3" fill="#151515"/></svg>
<div class="t" style="left:600.02px;top:56.13px;font-size:12.6px;line-height:12.6px;color:#2a2a2a;transform:scaleX(0.9533);">Problema: PM1134</div>
<svg style="left:726.7px;top:54.5px" width="13" height="13" viewBox="0 0 13 13"><path d="M1.5 2h3v10.3H0.2V3.3a1.3 1.3 0 0 1 1.3-1.3z" fill="#2a64a8"/><rect x="0.8" y="4" width="1.2" height="6" fill="#6fa0d8"/><rect x="3.9" y="0.3" width="7" height="5" rx="0.6" fill="#bfc3c8" stroke="#6e7278" stroke-width="0.8"/><rect x="4.8" y="1.3" width="5.2" height="1.1" fill="#f4f4f4"/><rect x="4.8" y="3.1" width="5.2" height="0.8" fill="#8a8e94"/><path d="M4.6 5.9h6.4l0.6 5.7H4.4z" fill="#d9b85a"/><circle cx="7.8" cy="8" r="1.6" fill="#f1dfa0"/><rect x="10.2" y="10" width="2.2" height="2.3" fill="#151515"/></svg>
<div class="t" style="left:741.69px;top:56.13px;font-size:12.6px;line-height:12.6px;color:#2a2a2a;transform:scaleX(0.9863);">Biblioteca de scripts:  datadictHelper</div>
<div style="left:965px;top:47.8px;width:191px;height:25px;background:#fff;border-top-left-radius:5px;border-top-right-radius:5px"></div>
<svg style="left:968px;top:46px" width="166" height="22" viewBox="0 0 166 22"><path d="M2 6 C40 5 80 2 120 1.5 L162 1 L162 15 L120 15 C80 15.5 40 20 2 20 Z" fill="#fbe800"/></svg>
<svg style="left:967px;top:54.5px" width="13" height="13" viewBox="0 0 13 13"><path d="M1.5 2h3v10.3H0.2V3.3a1.3 1.3 0 0 1 1.3-1.3z" fill="#2a64a8"/><rect x="0.8" y="4" width="1.2" height="6" fill="#6fa0d8"/><rect x="3.9" y="0.3" width="7" height="5" rx="0.6" fill="#bfc3c8" stroke="#6e7278" stroke-width="0.8"/><rect x="4.8" y="1.3" width="5.2" height="1.1" fill="#f4f4f4"/><rect x="4.8" y="3.1" width="5.2" height="0.8" fill="#8a8e94"/><path d="M4.6 5.9h6.4l0.6 5.7H4.4z" fill="#d9b85a"/><circle cx="7.8" cy="8" r="1.6" fill="#f1dfa0"/><rect x="10.2" y="10" width="2.2" height="2.3" fill="#151515"/></svg>
<div class="t" style="left:982.51px;top:56.33px;font-size:12.6px;line-height:12.6px;color:#2a2a2a;transform:scaleX(0.9599);">Política de datos:  rootcause</div>
<svg style="left:1140.6px;top:56.2px" width="9" height="9" viewBox="0 0 9 9"><path d="M1 1.5l1.5-1 2 2 2-2 1.5 1-2 2.5 2 2.5-1.5 1-2-2-2 2-1.5-1 2-2.5z" fill="#fff" stroke="#a8a8a8" stroke-width="0.8"/></svg>
<svg style="left:1430.5px;top:54.8px" width="9" height="4" viewBox="0 0 9 4"><rect x="0.5" y="0.5" width="8" height="3" fill="#fff" stroke="#8a93a3" stroke-width="0.9"/></svg>
<svg style="left:1449px;top:54px" width="8.5" height="9" viewBox="0 0 8.5 9"><rect x="0.5" y="0.5" width="7.5" height="8" fill="#fff" stroke="#8a93a3" stroke-width="0.9"/><path d="M0.5 2h7.5" stroke="#8a93a3" stroke-width="0.9"/></svg>
<div style="left:297.6px;top:72.4px;width:0.9px;height:612px;background:#dcdce6"></div>
<div style="left:300.8px;top:72.4px;width:1161.2px;height:611.3px;background:#fff;border-left:1.2px solid #ababab"></div>
<div style="left:301.5px;top:72.6px;width:1160.5px;height:1.2px;background:#c3c8d0"></div>
<div style="left:301.5px;top:96.2px;width:1160.5px;height:1.2px;background:#c9cdd3"></div>
<svg style="left:305.1px;top:79px" width="12" height="12" viewBox="0 0 12 12"><rect x="0.5" y="2" width="9" height="9.5" rx="1" fill="#3c7ab0" stroke="#2b5a80" stroke-width="0.9"/><rect x="2.5" y="7.5" width="5" height="3.5" fill="#e8eef5"/><rect x="6" y="0" width="6" height="6.5" fill="#3a9a48"/><path d="M7.5 1v4.5M7.5 3l2.5-2M7.5 3l2.5 2.5" stroke="#fff" stroke-width="0.9"/></svg>
<div class="t" style="left:321.18px;top:79.93px;font-size:12.6px;line-height:12.6px;color:#2a2a2a;transform:scaleX(0.9677);">Aceptar</div>
<svg style="left:372.8px;top:79px" width="12" height="12" viewBox="0 0 12 12"><path d="M2.6 2.6l6.8 6.8M9.4 2.6L2.6 9.4" stroke="#d4582c" stroke-width="4" stroke-linecap="round"/><path d="M2.6 2.6l6.8 6.8M9.4 2.6L2.6 9.4" stroke="#f47a45" stroke-width="2.6" stroke-linecap="round"/></svg>
<div class="t" style="left:388.42px;top:79.93px;font-size:12.6px;line-height:12.6px;color:#2a2a2a;transform:scaleX(0.9237);">Cancelar</div>
<svg style="left:444.5px;top:79px" width="12" height="12" viewBox="0 0 12 12"><rect x="0.5" y="0.5" width="11" height="11" rx="1" fill="#e6eef8" stroke="#4a78b0" stroke-width="0.9"/><rect x="3" y="0.5" width="6" height="4" fill="#fff" stroke="#4a78b0" stroke-width="0.8"/><rect x="2.5" y="7" width="7" height="4.5" fill="#9ab8dc"/></svg>
<div class="t" style="left:459.51px;top:79.93px;font-size:12.6px;line-height:12.6px;color:#2a2a2a;transform:scaleX(0.9365);">Guardar</div>
<svg style="left:512.8px;top:79px" width="12" height="12" viewBox="0 0 12 12"><rect x="1" y="1.5" width="10" height="2" rx="1" fill="#bbb" stroke="#888" stroke-width="0.6"/><path d="M2 4h8l-1 7.5h-6z" fill="#d8d8d8" stroke="#888" stroke-width="0.8"/><path d="M4.5 5v5.5M6 5v5.5M7.5 5v5.5" stroke="#999" stroke-width="0.6"/></svg>
<div class="t" style="left:527.89px;top:79.93px;font-size:12.6px;line-height:12.6px;color:#2a2a2a;transform:scaleX(0.9827);">Eliminar</div>
<svg style="left:581.6px;top:79px" width="12" height="12" viewBox="0 0 12 12"><circle cx="4.5" cy="4.5" r="3.5" fill="#f4f7fb" stroke="#555" stroke-width="1.3"/><path d="M7 7l4 4.5" stroke="#444" stroke-width="2"/></svg>
<div class="t" style="left:597.42px;top:79.93px;font-size:12.6px;line-height:12.6px;color:#2a2a2a;transform:scaleX(0.9479);">Encontrar</div>
<svg style="left:658.5px;top:79px" width="12" height="12" viewBox="0 0 12 12"><rect x="0.5" y="3.5" width="9" height="8" fill="#f4f6f9" stroke="#7a8290" stroke-width="0.9"/><path d="M2 6h6M2 8h6" stroke="#8a92a0" stroke-width="0.8"/><rect x="7" y="0.5" width="4.5" height="4.5" fill="#fff" stroke="#7a8290" stroke-width="0.9"/></svg>
<div class="t" style="left:674.03px;top:79.93px;font-size:12.6px;line-height:12.6px;color:#2a2a2a;transform:scaleX(0.9410);">Rellenar</div>
<svg style="left:726px;top:79px" width="12" height="12" viewBox="0 0 12 12"><path d="M1 8l5-6 5 5-4 4z" fill="#2c8ad6"/><path d="M3 7l3-3.5 3 3-2.5 2.5z" fill="#7fc3f0"/><circle cx="2" cy="10" r="1.6" fill="#2c8ad6"/></svg>
<div class="t" style="left:742.97px;top:79.93px;font-size:12.6px;line-height:12.6px;color:#2a2a2a;transform:scaleX(0.9950);">Configuración del indicador de color</div>
<svg style="left:1433px;top:77.4px" width="12" height="12" viewBox="0 0 12 12"><rect x="0.5" y="0.5" width="11" height="11" fill="#f6f4ee" stroke="#d6d2c4" stroke-width="0.6"/><circle cx="3" cy="3" r="2.2" fill="#e6d54a" stroke="#9a8a30" stroke-width="0.5"/><circle cx="6.5" cy="8.5" r="2.2" fill="#e6d54a" stroke="#9a8a30" stroke-width="0.5"/><path d="M5.5 3h5M9 8.5h2" stroke="#444"/></svg>
<svg style="left:1453px;top:82px" width="9" height="5" viewBox="0 0 9 5"><path d="M0 0h9l-4.5 4.5z" fill="#222"/></svg>
<div style="left:301.5px;top:97.4px;width:1148.5px;height:23px;background:linear-gradient(#f4f6f9,#fcfcfd 40%,#fff)"></div>
<div style="left:312px;top:120px;width:560px;height:1px;background:#eef0f3"></div>
<svg style="left:1338px;top:101px" width="66" height="17" viewBox="0 0 66 17"><path d="M2.7 2.7h11.8v11.8H2.7z" fill="none" stroke="#1a6fdc" stroke-width="2.7"/><g font-family="Liberation Sans" font-weight="bold" fill="#1a6fdc" stroke="#1a6fdc" stroke-width="0.35"><text x="20.3" y="6.9" font-size="7.4" textLength="40.2" lengthAdjust="spacingAndGlyphs">MICRO</text><text x="20.3" y="14.7" font-size="7.6" textLength="40.2" lengthAdjust="spacingAndGlyphs">FOCUS</text></g><circle cx="62.3" cy="2.9" r="0.9" fill="#1a6fdc"/></svg>
<div style="left:1450px;top:97.4px;width:12px;height:584.4px;background:#fff"></div>
<svg style="left:1453px;top:103px" width="9" height="6" viewBox="0 0 9 6"><path d="M1 5l3.5-3.5L8 5" fill="none" stroke="#555" stroke-width="1.3"/></svg>
<div style="left:1450.2px;top:114px;width:11.8px;height:385.2px;background:#cdcdcd"></div>
<svg style="left:1453px;top:669px" width="9" height="6" viewBox="0 0 9 6"><path d="M1 1l3.5 3.5L8 1" fill="none" stroke="#555" stroke-width="1.3"/></svg>
<div style="left:310px;top:129.3px;width:1131px;height:25.7px;background:#3c3c3c"></div>
<div class="t" style="left:313.74px;top:134.24px;font-size:14.6px;line-height:14.6px;color:#fff;font-weight:bold;transform:scaleX(0.9900);">Política de datos</div>
<div class="t" style="left:321.76px;top:184.83px;font-size:12.6px;line-height:12.6px;color:#2a2a2a;transform:scaleX(1.0100);">Nombre:</div>
<div class="t" style="left:321.83px;top:210.53px;font-size:12.6px;line-height:12.6px;color:#2a2a2a;transform:scaleX(0.9465);">Nombre de la base SQL:</div>
<div class="t" style="left:322.22px;top:236.73px;font-size:12.6px;line-height:12.6px;color:#2a2a2a;transform:scaleX(0.9207);">Clave única:</div>
<div class="t" style="left:321.68px;top:315.43px;font-size:12.6px;line-height:12.6px;color:#2a2a2a;transform:scaleX(0.9928);">Formulario predeterminado:</div>
<div class="t" style="left:321.70px;top:393.43px;font-size:12.6px;line-height:12.6px;color:#2a2a2a;transform:scaleX(0.9726);">Descripción:</div>
<div style="left:500.2px;top:182.4px;width:282.8px;height:24px;background:#fff"></div>
<div style="left:493.6px;top:181.5px;width:72.4px;height:15.5px;background:#fbe800;border-bottom-right-radius:2px"></div>
<div style="left:500.2px;top:182.4px;width:282.8px;height:24px;border:1.3px solid #4a4a4a"></div>
<div class="t" style="left:503.59px;top:186.13px;font-size:12.6px;line-height:12.6px;color:#2a2a2a;transform:scaleX(0.9642);">rootcause</div>
<div style="left:500.2px;top:208.3px;width:282.8px;height:24px;border:1.3px solid #4a4a4a;background:#fff"></div>
<svg style="left:500.2px;top:208.3px" width="5" height="5" viewBox="0 0 5 5"><path d="M0 0h4.5L0 4.5z" fill="#e02020"/></svg>
<div class="t" style="left:503.58px;top:212.43px;font-size:12.6px;line-height:12.6px;color:#2a2a2a;transform:scaleX(0.9717);">rootcause</div>
<div style="left:499.5px;top:234px;width:290px;height:43.4px;border:1px solid #b4b4b4;background:#fff"></div>
<div class="t" style="left:506.35px;top:239.93px;font-size:12.6px;line-height:12.6px;color:#2a2a2a;transform:scaleX(1.1291);">id</div>
<div style="left:500px;top:313.4px;width:282.5px;height:23.4px;border:1.3px solid #4a4a4a;background:#fff"></div>
<div class="t" style="left:503.58px;top:316.93px;font-size:12.6px;line-height:12.6px;color:#2a2a2a;transform:scaleX(0.9717);">rootcause</div>
<div style="left:322.1px;top:339.9px;width:12.7px;height:12.7px;border:1.3px solid #5a5a5a;background:#fff"></div>
<div class="t" style="left:338.00px;top:341.13px;font-size:12.6px;line-height:12.6px;color:#2a2a2a;transform:scaleX(0.9754);">Prohibir acceso predeterminado</div>
<div style="left:637.3px;top:339.9px;width:12.7px;height:12.7px;border:1.3px solid #5a5a5a;background:#fff"></div>
<div class="t" style="left:653.94px;top:341.13px;font-size:12.6px;line-height:12.6px;color:#2a2a2a;transform:scaleX(0.9487);">Tabla del sistema</div>
<div style="left:322.1px;top:366.1px;width:12.7px;height:12.7px;border:1.3px solid #5a5a5a;background:#fff"></div>
<div class="t" style="left:337.98px;top:367.53px;font-size:12.6px;line-height:12.6px;color:#2a2a2a;transform:scaleX(0.9892);">Habilitar comprobación de referencia de datos</div>
<div style="left:500px;top:391.5px;width:282.5px;height:62.3px;border:1.3px solid #4a4a4a;background:#fff"></div>
<div style="left:765px;top:393px;width:16px;height:58.7px;background:#fafafa"></div>
<svg style="left:769px;top:398px" width="9" height="6" viewBox="0 0 9 6"><path d="M1 5l3.5-3.5L8 5" fill="none" stroke="#bbb" stroke-width="1.1"/></svg>
<svg style="left:769px;top:441px" width="9" height="6" viewBox="0 0 9 6"><path d="M1 1l3.5 3.5L8 1" fill="none" stroke="#bbb" stroke-width="1.1"/></svg>
<div class="t" style="left:501.70px;top:395.83px;font-size:12.6px;line-height:12.6px;color:#2a2a2a;transform:scaleX(0.9694);">Problem Management Database</div>
<div style="left:828.6px;top:181.9px;width:612px;height:273px;border:1px solid #c6c6c6;background:#fff"></div>
<div style="left:829.6px;top:201px;width:610px;height:1px;background:#cfcfcf"></div>
<div style="left:1186.4px;top:181.9px;width:130px;height:20px;background:#fff;border-left:1px solid #c6c6c6;border-right:1px solid #c6c6c6"></div>
<div style="left:1186.4px;top:181.9px;width:130px;height:1.6px;background:#f0a860"></div>
<div style="left:949.3px;top:182px;width:1px;height:19px;background:#c6c6c6"></div>
<div style="left:1071.3px;top:182px;width:1px;height:19px;background:#c6c6c6"></div>
<svg style="left:834.4px;top:188.5px" width="8" height="8" viewBox="0 0 8 8"><path d="M4 0.5L7.5 4 4 7.5 0.5 4z" fill="#e4eef2" stroke="#5f7c88" stroke-width="1"/><path d="M4 2.3L5.7 4 4 5.7 2.3 4z" fill="#9dbdc8"/></svg>
<div class="t" style="left:847.45px;top:187.33px;font-size:12.6px;line-height:12.6px;color:#2a2a2a;transform:scaleX(0.9189);">Especificaciones ...</div>
<svg style="left:955px;top:188.5px" width="8" height="8" viewBox="0 0 8 8"><path d="M4 0.5L7.5 4 4 7.5 0.5 4z" fill="#e4eef2" stroke="#5f7c88" stroke-width="1"/><path d="M4 2.3L5.7 4 4 5.7 2.3 4z" fill="#9dbdc8"/></svg>
<div class="t" style="left:968.45px;top:187.33px;font-size:12.6px;line-height:12.6px;color:#2a2a2a;transform:scaleX(0.9236);">Especificaciones ...</div>
<svg style="left:1076.7px;top:188.5px" width="8" height="8" viewBox="0 0 8 8"><path d="M4 0.5L7.5 4 4 7.5 0.5 4z" fill="#e4eef2" stroke="#5f7c88" stroke-width="1"/><path d="M4 2.3L5.7 4 4 5.7 2.3 4z" fill="#9dbdc8"/></svg>
<div class="t" style="left:1090.00px;top:187.33px;font-size:12.6px;line-height:12.6px;color:#2a2a2a;transform:scaleX(0.9509);">Gestión de colas</div>
<svg style="left:1192px;top:188.5px" width="8" height="8" viewBox="0 0 8 8"><path d="M4 0.5L7.5 4 4 7.5 0.5 4z" fill="#e4eef2" stroke="#5f7c88" stroke-width="1"/><path d="M4 2.3L5.7 4 4 5.7 2.3 4z" fill="#9dbdc8"/></svg>
<div class="t" style="left:1205.00px;top:187.33px;font-size:12.6px;line-height:12.6px;color:#2a2a2a;transform:scaleX(0.9510);">Columnas de tabla...</div>
<div class="t" style="left:1322.3px;top:182px;font:bold 11.5px/11px 'Liberation Sans';color:#222">&raquo;</div>
<div class="t" style="left:1329px;top:189.3px;font:8px/8px 'Liberation Sans';color:#222">2</div>
<div class="t" style="left:841.39px;top:209.33px;font-size:12.6px;line-height:12.6px;color:#2a2a2a;transform:scaleX(0.9703);">Columnas para mostrar en la lista de autocompletar:</div>
<div style="left:842px;top:232.3px;width:341px;height:209px;border:1px solid #b8b8b8;background:#fff"></div>
<div style="left:322.8px;top:456.2px;width:1117.6px;height:227.5px;border-left:1px solid #c6c6c6;border-right:1px solid #c6c6c6;border-top:1px solid #d6d6d6;background:#fff"></div>
<div style="left:485px;top:475.0px;width:955.4px;height:1px;background:#c6c6c6"></div>
<div style="left:322.8px;top:455.8px;width:162.2px;height:1.6px;background:#f0a860"></div>
<div style="left:485px;top:456.2px;width:1px;height:19px;background:#c6c6c6"></div>
<div style="left:578.3px;top:456.2px;width:1px;height:19px;background:#c6c6c6"></div>
<div style="left:338.6px;top:462.3px;width:140.4px;height:14.4px;background:#fbe800"></div>
<svg style="left:328.3px;top:462.4px" width="8" height="8" viewBox="0 0 8 8"><path d="M4 0.5L7.5 4 4 7.5 0.5 4z" fill="#e4eef2" stroke="#5f7c88" stroke-width="1"/><path d="M4 2.3L5.7 4 4 5.7 2.3 4z" fill="#9dbdc8"/></svg>
<div class="t" style="left:341.08px;top:461.13px;font-size:12.6px;line-height:12.6px;color:#2a2a2a;transform:scaleX(0.9861);">Configuración del campo</div>
<svg style="left:491.5px;top:462.4px" width="8" height="8" viewBox="0 0 8 8"><path d="M4 0.5L7.5 4 4 7.5 0.5 4z" fill="#e4eef2" stroke="#5f7c88" stroke-width="1"/><path d="M4 2.3L5.7 4 4 5.7 2.3 4z" fill="#9dbdc8"/></svg>
<div class="t" style="left:504.74px;top:461.13px;font-size:12.6px;line-height:12.6px;color:#2a2a2a;transform:scaleX(0.9601);">Validaciones</div>
<div style="left:328.3px;top:480.1px;width:1106.7px;height:201px;border:1px solid #b8b8b8;background:#fff"></div>
<div style="left:329.3px;top:502.4px;width:1087px;height:1px;background:#fafafa"></div>
<div style="left:329.3px;top:521.9499999999999px;width:1087px;height:1px;background:#fafafa"></div>
<div style="left:329.3px;top:541.5px;width:1087px;height:1px;background:#fafafa"></div>
<div style="left:329.3px;top:561.05px;width:1087px;height:1px;background:#fafafa"></div>
<div style="left:329.3px;top:580.6px;width:1087px;height:1px;background:#fafafa"></div>
<div style="left:329.3px;top:600.15px;width:1087px;height:1px;background:#fafafa"></div>
<div style="left:329.3px;top:619.7px;width:1087px;height:1px;background:#fafafa"></div>
<div style="left:329.3px;top:639.25px;width:1087px;height:1px;background:#fafafa"></div>
<div style="left:329.3px;top:658.8px;width:1087px;height:1px;background:#fafafa"></div>
<div style="left:547px;top:481.6px;width:1px;height:198.5px;background:#f8f8f8"></div>
<div style="left:613px;top:481.6px;width:1px;height:198.5px;background:#f8f8f8"></div>
<div style="left:741px;top:481.6px;width:1px;height:198.5px;background:#f8f8f8"></div>
<div style="left:813px;top:481.6px;width:1px;height:198.5px;background:#f8f8f8"></div>
<div style="left:948px;top:481.6px;width:1px;height:198.5px;background:#f8f8f8"></div>
<div style="left:1056px;top:481.6px;width:1px;height:198.5px;background:#f8f8f8"></div>
<div style="left:1164px;top:481.6px;width:1px;height:198.5px;background:#f8f8f8"></div>
<div style="left:1273px;top:481.6px;width:1px;height:198.5px;background:#f8f8f8"></div>
<div style="left:1381px;top:481.6px;width:1px;height:198.5px;background:#f8f8f8"></div>
<div style="left:329.3px;top:620.3px;width:1087px;height:19.1px;background:#d9d9d9"></div>
<div style="left:611.8px;top:626.8px;width:99.6px;height:15.3px;background:#dede00"></div>
<div style="left:329.8px;top:627.3px;width:153px;height:14px;background:#f4e600"></div>
<div style="left:1416.4px;top:481.6px;width:17.6px;height:198.5px;background:#f8f8f8"></div>
<svg style="left:1421px;top:487.5px" width="9" height="6" viewBox="0 0 9 6"><path d="M1 5l3.5-3.5L8 5" fill="none" stroke="#555" stroke-width="1.3"/></svg>
<div style="left:1417.6px;top:576.4px;width:15.3px;height:74px;background:#cdcdcd"></div>
<div style="left:611.8px;top:486px;width:95.4px;height:14.4px;background:#fbe800"></div>
<div class="t" style="left:333.97px;top:487.63px;font-size:12.6px;line-height:12.6px;color:#2a2a2a;">Nombre de campo</div>
<div class="t" style="left:552.53px;top:487.63px;font-size:12.6px;line-height:12.6px;color:#2a2a2a;transform:scaleX(0.9830);">Título</div>
<div class="t" style="left:620.13px;top:487.63px;font-size:12.6px;line-height:12.6px;color:#2a2a2a;">Tipo de campo</div>
<div class="t" style="left:746.54px;top:487.63px;font-size:12.6px;line-height:12.6px;color:#2a2a2a;transform:scaleX(0.9448);">Tabla de r...</div>
<div class="t" style="left:818.44px;top:487.63px;font-size:12.6px;line-height:12.6px;color:#2a2a2a;transform:scaleX(0.9694);">Tipo de uso</div>
<div class="t" style="left:951.76px;top:487.63px;font-size:12.6px;line-height:12.6px;color:#2a2a2a;transform:scaleX(1.0097);">Disponible</div>
<div class="t" style="left:1059.95px;top:487.63px;font-size:12.6px;line-height:12.6px;color:#2a2a2a;">Invisible</div>
<div class="t" style="left:1168.85px;top:487.63px;font-size:12.6px;line-height:12.6px;color:#2a2a2a;transform:scaleX(0.9715);">Solo lectura</div>
<div class="t" style="left:1277.07px;top:487.63px;font-size:12.6px;line-height:12.6px;color:#2a2a2a;transform:scaleX(0.9967);">Encriptado</div>
<div class="t" style="left:1385.92px;top:487.63px;font-size:12.6px;line-height:12.6px;color:#2a2a2a;transform:scaleX(0.8482);">Sis...</div>
<div class="t" style="left:335.01px;top:508.13px;font-size:12.6px;line-height:12.6px;color:#2a2a2a;transform:scaleX(0.9321);">current.phase</div>
<div class="t" style="left:551.89px;top:508.13px;font-size:12.6px;line-height:12.6px;color:#2a2a2a;transform:scaleX(0.8844);">Phase</div>
<div class="t" style="left:817.38px;top:508.13px;font-size:12.6px;line-height:12.6px;color:#2a2a2a;transform:scaleX(0.9252);">Sistema</div>
<div class="t" style="left:952.61px;top:508.13px;font-size:12.6px;line-height:12.6px;color:#2a2a2a;transform:scaleX(0.9877);">true</div>
<div class="t" style="left:335.01px;top:527.68px;font-size:12.6px;line-height:12.6px;color:#2a2a2a;transform:scaleX(0.9415);">cust.visible</div>
<div class="t" style="left:552.23px;top:527.68px;font-size:12.6px;line-height:12.6px;color:#2a2a2a;transform:scaleX(0.9115);">Custome...</div>
<div class="t" style="left:952.61px;top:527.68px;font-size:12.6px;line-height:12.6px;color:#2a2a2a;transform:scaleX(0.9877);">true</div>
<div class="t" style="left:334.97px;top:547.23px;font-size:12.6px;line-height:12.6px;color:#2a2a2a;">description</div>
<div class="t" style="left:551.82px;top:547.23px;font-size:12.6px;line-height:12.6px;color:#2a2a2a;transform:scaleX(0.9541);">Descripti...</div>
<div class="t" style="left:620.33px;top:547.23px;font-size:12.6px;line-height:12.6px;color:#2a2a2a;transform:scaleX(0.9785);">Texto multilínea</div>
<div class="t" style="left:817.88px;top:547.23px;font-size:12.6px;line-height:12.6px;color:#2a2a2a;transform:scaleX(1.0160);">Aplicación</div>
<div class="t" style="left:952.61px;top:547.23px;font-size:12.6px;line-height:12.6px;color:#2a2a2a;transform:scaleX(0.9877);">true</div>
<div class="t" style="left:1060.94px;top:547.23px;font-size:12.6px;line-height:12.6px;color:#2a2a2a;transform:scaleX(0.9616);">false</div>
<div class="t" style="left:1169.24px;top:547.23px;font-size:12.6px;line-height:12.6px;color:#2a2a2a;transform:scaleX(0.9616);">false</div>
<div class="t" style="left:1277.94px;top:547.23px;font-size:12.6px;line-height:12.6px;color:#2a2a2a;transform:scaleX(0.9616);">false</div>
<div class="t" style="left:1386.24px;top:547.23px;font-size:12.6px;line-height:12.6px;color:#2a2a2a;transform:scaleX(0.9737);">fal...</div>
<div class="t" style="left:334.96px;top:566.78px;font-size:12.6px;line-height:12.6px;color:#2a2a2a;transform:scaleX(1.0239);">dump</div>
<div class="t" style="left:551.77px;top:566.78px;font-size:12.6px;line-height:12.6px;color:#2a2a2a;transform:scaleX(1.0041);">Dump</div>
<div class="t" style="left:952.64px;top:566.78px;font-size:12.6px;line-height:12.6px;color:#2a2a2a;transform:scaleX(0.9616);">false</div>
<div class="t" style="left:335.00px;top:586.33px;font-size:12.6px;line-height:12.6px;color:#2a2a2a;transform:scaleX(0.9611);">estimatedCost</div>
<div class="t" style="left:551.85px;top:586.33px;font-size:12.6px;line-height:12.6px;color:#2a2a2a;transform:scaleX(0.9206);">Estimate...</div>
<div class="t" style="left:952.61px;top:586.33px;font-size:12.6px;line-height:12.6px;color:#2a2a2a;transform:scaleX(0.9877);">true</div>
<div class="t" style="left:1060.94px;top:586.33px;font-size:12.6px;line-height:12.6px;color:#2a2a2a;transform:scaleX(0.9616);">false</div>
<div class="t" style="left:1169.24px;top:586.33px;font-size:12.6px;line-height:12.6px;color:#2a2a2a;transform:scaleX(0.9616);">false</div>
<div class="t" style="left:1277.94px;top:586.33px;font-size:12.6px;line-height:12.6px;color:#2a2a2a;transform:scaleX(0.9616);">false</div>
<div class="t" style="left:1386.24px;top:586.33px;font-size:12.6px;line-height:12.6px;color:#2a2a2a;transform:scaleX(0.9737);">fal...</div>
<div class="t" style="left:334.99px;top:605.88px;font-size:12.6px;line-height:12.6px;color:#2a2a2a;transform:scaleX(0.9678);">estimatedMandays</div>
<div class="t" style="left:551.85px;top:605.88px;font-size:12.6px;line-height:12.6px;color:#2a2a2a;transform:scaleX(0.9206);">Estimate...</div>
<div class="t" style="left:952.61px;top:605.88px;font-size:12.6px;line-height:12.6px;color:#2a2a2a;transform:scaleX(0.9877);">true</div>
<div class="t" style="left:1060.94px;top:605.88px;font-size:12.6px;line-height:12.6px;color:#2a2a2a;transform:scaleX(0.9616);">false</div>
<div class="t" style="left:1169.24px;top:605.88px;font-size:12.6px;line-height:12.6px;color:#2a2a2a;transform:scaleX(0.9616);">false</div>
<div class="t" style="left:1277.94px;top:605.88px;font-size:12.6px;line-height:12.6px;color:#2a2a2a;transform:scaleX(0.9616);">false</div>
<div class="t" style="left:1386.24px;top:605.88px;font-size:12.6px;line-height:12.6px;color:#2a2a2a;transform:scaleX(0.9737);">fal...</div>
<div class="t" style="left:334.99px;top:625.43px;font-size:12.6px;line-height:12.6px;color:#2a2a2a;transform:scaleX(0.9757);">expected.resolution.time</div>
<div class="t" style="left:551.87px;top:625.43px;font-size:12.6px;line-height:12.6px;color:#2a2a2a;transform:scaleX(0.9063);">Expecte...</div>
<div class="t" style="left:952.64px;top:625.43px;font-size:12.6px;line-height:12.6px;color:#2a2a2a;transform:scaleX(0.9616);">false</div>
<div class="t" style="left:335.34px;top:644.98px;font-size:12.6px;line-height:12.6px;color:#2a2a2a;transform:scaleX(0.9670);">fecha.fin</div>
<div class="t" style="left:551.87px;top:644.98px;font-size:12.6px;line-height:12.6px;color:#2a2a2a;transform:scaleX(0.9007);">Fecha Fin</div>
<div class="t" style="left:952.61px;top:644.98px;font-size:12.6px;line-height:12.6px;color:#2a2a2a;transform:scaleX(0.9877);">true</div>
<div class="t" style="left:335.33px;top:664.53px;font-size:12.6px;line-height:12.6px;color:#2a2a2a;transform:scaleX(1.0275);">folder</div>
<div class="t" style="left:551.79px;top:664.53px;font-size:12.6px;line-height:12.6px;color:#2a2a2a;transform:scaleX(0.9773);">Folder</div>
<div class="t" style="left:952.61px;top:664.53px;font-size:12.6px;line-height:12.6px;color:#2a2a2a;transform:scaleX(0.9877);">true</div>
<div style="left:743.2px;top:621.3px;width:68.7px;height:16.8px;border:1px solid #333;background:#fff"></div>
<div style="left:747.3px;top:622.5px;width:1px;height:14.5px;background:#333"></div>
<div style="left:796.5px;top:621.3px;width:1px;height:16.8px;background:#333"></div>
<svg style="left:800px;top:627.5px" width="8" height="5" viewBox="0 0 8 5"><path d="M1 1l3 3 3-3" fill="none" stroke="#444" stroke-width="1.1"/></svg>
<svg style="left:651px;top:644px" width="14" height="20" viewBox="0 0 14 20"><path d="M1.5 1.2v15.8l3.6-3.4 2.6 5.4 2-0.9-2.5-5.2h5z" fill="#fff" stroke="#1a1a1a" stroke-width="0.9" stroke-linejoin="round"/></svg>
<div style="left:298px;top:681.8px;width:1164px;height:5.2px;background:linear-gradient(#e6e8ed,#eef1f7)"></div>
<div style="left:301px;top:680.8px;width:1161px;height:1px;background:#b9bdc3"></div>
<div style="left:299px;top:687px;width:1163px;height:45px;background:#fff;border-top-left-radius:5px"></div>
<div style="left:299px;top:687px;width:1163px;height:25px;background:linear-gradient(#f2f5fa,#fff);border-top-left-radius:5px"></div>
<div style="left:299px;top:687px;width:92.5px;height:25px;background:linear-gradient(#e1e7f0,#f3f6fa 75%,#fff);border-top-left-radius:5px;border-top-right-radius:5px"></div>
<svg style="left:303.3px;top:694.5px" width="13" height="12" viewBox="0 0 13 12"><path d="M1 9l2.5-8.5h2l2 8.5z" fill="#e8b850" stroke="#b08830" stroke-width="0.6"/><circle cx="8.3" cy="7.8" r="4" fill="#e03838"/><path d="M6.8 6.3l3 3M9.8 6.3l-3 3" stroke="#fff" stroke-width="0.9"/></svg>
<div class="t" style="left:318.26px;top:695.53px;font-size:12.6px;line-height:12.6px;color:#2a2a2a;transform:scaleX(0.9170);">Messages</div>
<svg style="left:377.2px;top:696px" width="9" height="9" viewBox="0 0 9 9"><path d="M1 1.5l1.5-1 2 2 2-2 1.5 1-2 2.5 2 2.5-1.5 1-2-2-2 2-1.5-1 2-2.5z" fill="#fff" stroke="#a8a8a8" stroke-width="0.8"/></svg>
<svg style="left:1410.6px;top:693.8px" width="12" height="9" viewBox="0 0 12 9"><rect x="0.5" y="0.5" width="9" height="7" fill="#f0f4fa" stroke="#8aa0c0" stroke-width="0.9"/><path d="M6 4l4.5 4.5M10.5 4L6 8.5" stroke="#e85a20" stroke-width="1.8"/></svg>
<svg style="left:1430.5px;top:693.8px" width="8.5" height="3.5" viewBox="0 0 8.5 3.5"><rect x="0.5" y="0.5" width="7.5" height="2.5" fill="#fff" stroke="#8a93a3" stroke-width="0.9"/></svg>
<svg style="left:1449.3px;top:693.8px" width="8" height="8.5" viewBox="0 0 8 8.5"><rect x="0.5" y="0.5" width="7" height="7.5" fill="#fff" stroke="#8a93a3" stroke-width="0.9"/><path d="M0.5 2h7" stroke="#8a93a3" stroke-width="0.9"/></svg>
</body></html>
